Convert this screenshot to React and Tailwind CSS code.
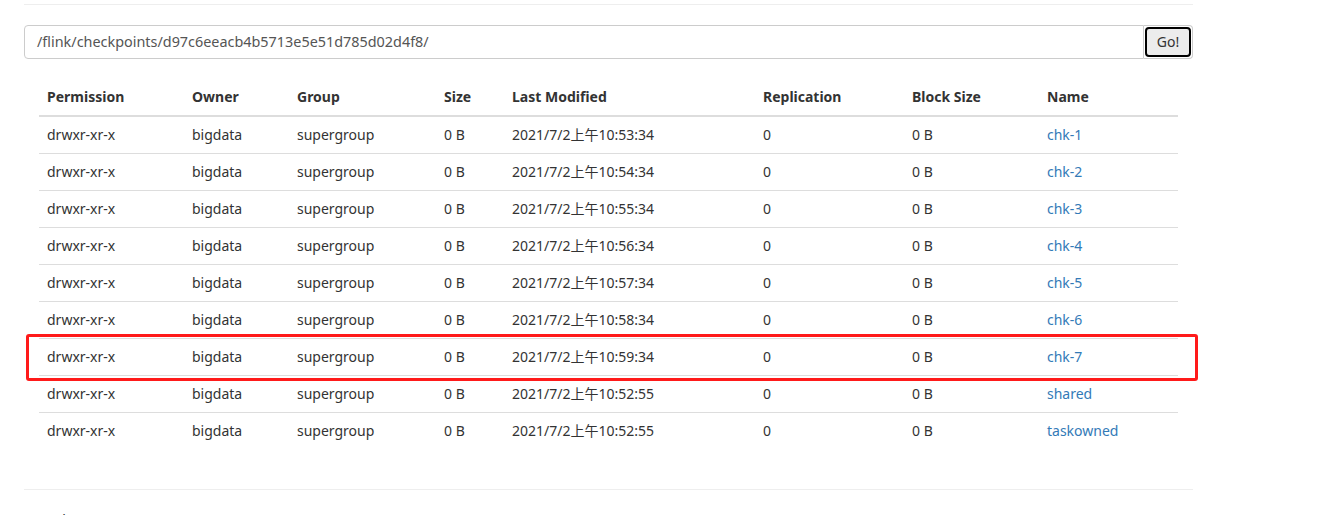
import React from "react";

const ROWS = [
  { time: "2021/7/2上午10:53:34", name: "chk-1" },
  { time: "2021/7/2上午10:54:34", name: "chk-2" },
  { time: "2021/7/2上午10:55:34", name: "chk-3" },
  { time: "2021/7/2上午10:56:34", name: "chk-4" },
  { time: "2021/7/2上午10:57:34", name: "chk-5" },
  { time: "2021/7/2上午10:58:34", name: "chk-6" },
  { time: "2021/7/2上午10:59:34", name: "chk-7" },
  { time: "2021/7/2上午10:52:55", name: "shared" },
  { time: "2021/7/2上午10:52:55", name: "taskowned" },
];

const COLS = [
  { label: "Permission", w: "w-[145px]" },
  { label: "Owner", w: "w-[105px]" },
  { label: "Group", w: "w-[147px]" },
  { label: "Size", w: "w-[68px]" },
  { label: "Last Modified", w: "w-[251px]" },
  { label: "Replication", w: "w-[149px]" },
  { label: "Block Size", w: "w-[135px]" },
  { label: "Name", w: "w-[139px]" },
];

export default function App() {
  return (
    <div className="relative w-[1337px] h-[515px] overflow-hidden bg-white text-[14px] leading-[20px] text-[#333] font-['Noto_Sans','Noto_Sans_CJK_SC',sans-serif]">
      <div className="ml-[24px] w-[1169px] pt-[4px]">
        <div className="border-t border-[#eee]" />

        {/* path input */}
        <div className="flex mt-[20px] h-[34px]">
          <div className="flex-1 flex items-center px-[12px] border border-[#ccc] rounded-l-[4px] text-[#555] text-[14.4px]">
            /flink/checkpoints/d97c6eeacb4b5713e5e51d785d02d4f8/
          </div>
          <div className="w-[49px] p-[1px] border border-[#ccc] border-l-0 rounded-r-[4px]">
            <button className="w-full h-full flex items-center justify-center bg-[#ececec] border-2 border-black rounded-[4px] text-[#333]">
              Go!
            </button>
          </div>
        </div>

        {/* listing */}
        <div className="px-[15px] mt-[20px]">
          <table className="w-[1139px] border-collapse table-fixed">
            <thead>
              <tr>
                {COLS.map((c) => (
                  <th
                    key={c.label}
                    className={`${c.w} text-left font-bold px-[8px] py-[8px] border-b-2 border-[#ddd]`}
                  >
                    {c.label}
                  </th>
                ))}
              </tr>
            </thead>
            <tbody>
              {ROWS.map((r, i) => (
                <tr key={r.name} className={i > 0 ? "border-t border-[#ddd]" : ""}>
                  <td className="px-[8px] py-[8px]">drwxr-xr-x</td>
                  <td className="px-[8px] py-[8px]">bigdata</td>
                  <td className="px-[8px] py-[8px]">supergroup</td>
                  <td className="px-[8px] py-[8px]">0 B</td>
                  <td className="px-[8px] py-[8px]">{r.time}</td>
                  <td className="px-[8px] py-[8px]">0</td>
                  <td className="px-[8px] py-[8px]">0 B</td>
                  <td className="px-[8px] py-[8px]">
                    <a href="#" className="text-[#337ab7]">{r.name}</a>
                  </td>
                </tr>
              ))}
            </tbody>
          </table>
        </div>

        <div className="mt-[40px] border-t border-[#eee]" />
        <p className="mt-[20px] px-[15px] text-[#333]">Hadoop, 2017.</p>
      </div>

      {/* annotation box over the chk-7 row */}
      <div className="absolute left-[26px] top-[334px] w-[1172px] h-[47px] border-[3px] border-[#ff1a1a] rounded-[3px] pointer-events-none" />
    </div>
  );
}
